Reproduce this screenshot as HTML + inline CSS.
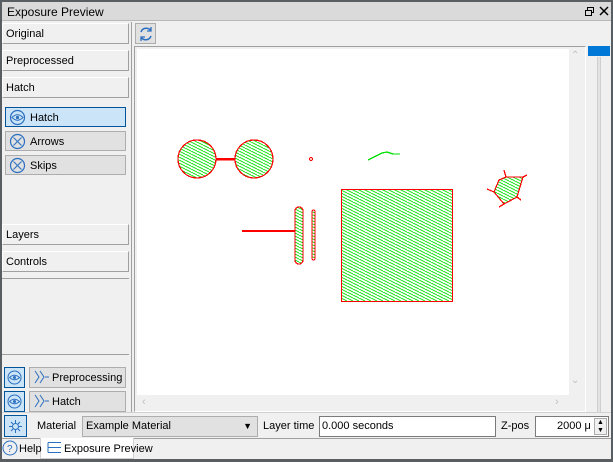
<!DOCTYPE html>
<html><head><meta charset="utf-8"><style>
*{box-sizing:border-box;margin:0;padding:0}
body{width:613px;height:462px;background:#595e62;font-family:"Liberation Sans",sans-serif;font-size:11px;color:#000;position:relative;overflow:hidden}
.a{position:absolute}
.win{left:2px;top:2px;width:609px;height:457px;background:#f0f0f0}
.title{left:0;top:0;width:609px;height:19px;background:#dadada;border-bottom:1px solid #b8b8b8}
.btn{position:absolute;background:#f0f0f0;border:1px solid #fff;border-right-color:#a0a0a0;border-bottom-color:#a0a0a0;padding-left:3px;padding-top:2px;line-height:17px}
.sb{position:absolute;background:#e1e1e1;border:1px solid #adadad;line-height:17px;padding-top:2px;padding-left:24px}
.sb svg{position:absolute;left:3px;top:1px}
.sel{background:#cce4f7;border-color:#005499}
.eye{position:absolute;width:21px;height:21px;background:#cce4f7;border:1px solid #005499}
.eye svg{position:absolute;left:2px;top:2px}
</style></head><body>
<div class="a win">
 <div class="a title"><span class="a" style="left:5px;top:3px;font-size:12px">Exposure Preview</span>
  <svg class="a" style="left:582px;top:4px" width="11" height="11"><rect x="1.5" y="4.5" width="6" height="5" fill="none" stroke="#000"/><path d="M3.5 4.5V1.5h6v5h-2" fill="none" stroke="#000"/></svg>
  <svg class="a" style="left:597px;top:4px" width="10" height="10"><path d="M1 1L9 9M9 1L1 9" stroke="#000" stroke-width="1.5"/></svg>
 </div>
</div>
<div class="btn" style="left:2px;top:23px;width:127px;height:21px">Original</div>
<div class="btn" style="left:2px;top:50px;width:127px;height:21px">Preprocessed</div>
<div class="btn" style="left:2px;top:77px;width:127px;height:21px">Hatch</div>
<div class="sb sel" style="left:5px;top:107px;width:121px;height:20px">Hatch<svg width="17" height="17"><circle cx="8.5" cy="8.5" r="7" fill="none" stroke="#2a6fc0" stroke-width="1.2"/><path d="M3 8.5Q8.5 3 14 8.5Q8.5 14 3 8.5Z" fill="none" stroke="#2a6fc0"/><circle cx="8.5" cy="8.5" r="1.6" fill="#2a6fc0"/></svg></div>
<div class="sb" style="left:5px;top:131px;width:121px;height:20px">Arrows<svg width="17" height="17"><circle cx="8.5" cy="8.5" r="7" fill="none" stroke="#2a6fc0" stroke-width="1.2"/><path d="M4.5 4.5L12.5 12.5M12.5 4.5L4.5 12.5" stroke="#2a6fc0"/></svg></div>
<div class="sb" style="left:5px;top:155px;width:121px;height:20px">Skips<svg width="17" height="17"><circle cx="8.5" cy="8.5" r="7" fill="none" stroke="#2a6fc0" stroke-width="1.2"/><path d="M4.5 4.5L12.5 12.5M12.5 4.5L4.5 12.5" stroke="#2a6fc0"/></svg></div>
<div class="btn" style="left:2px;top:224px;width:127px;height:21px">Layers</div>
<div class="btn" style="left:2px;top:251px;width:127px;height:21px">Controls</div>
<div class="a" style="left:2px;top:278px;width:127px;height:1px;background:#a0a0a0"></div>
<div class="a" style="left:2px;top:354px;width:127px;height:1px;background:#a0a0a0"></div>
<div class="a" style="left:131px;top:22px;width:1px;height:390px;background:#a0a0a0"></div>
<div class="eye" style="left:4px;top:367px"><svg width="15" height="15"><circle cx="7.5" cy="7.5" r="6.5" fill="none" stroke="#2a6fc0"/><path d="M2.5 7.5Q7.5 3 12.5 7.5Q7.5 12 2.5 7.5Z" fill="none" stroke="#2a6fc0"/><circle cx="7.5" cy="7.5" r="1.5" fill="#2a6fc0"/></svg></div>
<div class="eye" style="left:4px;top:391px"><svg width="15" height="15"><circle cx="7.5" cy="7.5" r="6.5" fill="none" stroke="#2a6fc0"/><path d="M2.5 7.5Q7.5 3 12.5 7.5Q7.5 12 2.5 7.5Z" fill="none" stroke="#2a6fc0"/><circle cx="7.5" cy="7.5" r="1.5" fill="#2a6fc0"/></svg></div>
<div class="sb" style="left:29px;top:367px;width:97px;height:21px;padding-left:22px">Preprocessing<svg width="18" height="16"><path d="M2 2L6 8L2 14M7 2L11 8L7 14M12 8h4" fill="none" stroke="#2a6fc0"/></svg></div>
<div class="sb" style="left:29px;top:391px;width:97px;height:21px;padding-left:22px">Hatch<svg width="18" height="16"><path d="M2 2L6 8L2 14M7 2L11 8L7 14M12 8h4" fill="none" stroke="#2a6fc0"/></svg></div>
<div class="a" style="left:135px;top:23px;width:21px;height:21px;background:#e1e1e1;border:1px solid #adadad"><svg class="a" style="left:2px;top:2px" width="16" height="16"><path d="M3 6A5.5 5.5 0 0 1 13 5M13 10A5.5 5.5 0 0 1 3 11" fill="none" stroke="#2a6fc0" stroke-width="1.5"/><path d="M13 1V5H9M3 15V11H7" fill="none" stroke="#2a6fc0" stroke-width="1.3"/></svg></div>
<div class="a" style="left:134px;top:46px;width:452px;height:366px;border:1px solid #a0a0a0;border-right-color:#fff;border-bottom-color:#fff;background:#f0f0f0"></div>
<div class="a" style="left:137px;top:49px;width:432px;height:346px;background:#fff"></div>
<span class="a" style="left:571px;top:50px;color:#c0c0c0;font-size:10px">&#8963;</span>
<span class="a" style="left:571px;top:375px;color:#c0c0c0;font-size:10px">&#8964;</span>
<span class="a" style="left:142px;top:396px;color:#c0c0c0;font-size:11px">&#8249;</span>
<span class="a" style="left:555px;top:396px;color:#c0c0c0;font-size:11px">&#8250;</span>
<div class="a" style="left:588px;top:46px;width:22px;height:10px;background:#0078d7"></div>
<div class="a" style="left:597px;top:57px;width:4px;height:355px;background:#e3e3e3;border-left:1px solid #cfcfcf;border-right:1px solid #cfcfcf"></div>
<svg class="a" style="left:137px;top:49px" width="432" height="346" shape-rendering="crispEdges">
<defs><pattern id="h" width="6" height="3" patternUnits="userSpaceOnUse"><rect width="6" height="3" fill="#fff"/><path d="M0 0L6 3M-6 0L0 3M0 -3L6 0" stroke="#00e000" stroke-width="1"/></pattern></defs>
<g stroke="#f00" stroke-width="1.2" fill="url(#h)">
<circle cx="60" cy="110" r="19"/><circle cx="117" cy="110" r="19"/>
<path d="M79 110H98" stroke-width="2.5"/>
<circle cx="174" cy="110" r="1.5" fill="none"/>
<rect x="204.5" y="140.5" width="111" height="112"/>
<rect x="158" y="158" width="8" height="57" rx="4"/>
<rect x="175" y="161" width="3" height="50" rx="1.5"/>
<path d="M105 182H158" stroke-width="2"/>
<path d="M369 128L386 128L380 148L367 155L357 143L362 131Z"/>
<path d="M369 128L367 121M386 128L390 126M357 143L350 140M367 155L362 158M380 148L384 151" stroke-width="1.3"/>
</g>
<path d="M231 111L245 104L250 103L256 105L263 105" stroke="#00e000" stroke-width="1.3" fill="none"/>
</svg>
<div class="a" style="left:2px;top:412px;width:609px;height:1px;background:#d0d0d0"></div>
<div class="eye" style="left:4px;top:415px;width:23px;height:22px"><svg width="17" height="17"><circle cx="8.5" cy="8.5" r="3" fill="none" stroke="#2a6fc0"/><path d="M8.5 2v3M8.5 12v3M2 8.5h3M12 8.5h3M4 4l2 2M11 11l2 2M13 4l-2 2M4 13l2-2" stroke="#2a6fc0"/></svg></div>
<span class="a" style="left:37px;top:420px">Material</span>
<div class="a" style="left:82px;top:416px;width:176px;height:21px;background:#e1e1e1;border:1px solid #adadad;line-height:19px;padding-left:3px">Example Material<span class="a" style="right:5px;top:0;font-size:9px">&#9660;</span></div>
<span class="a" style="left:263px;top:420px">Layer time</span>
<div class="a" style="left:319px;top:416px;width:177px;height:21px;background:#fff;border:1px solid #7a7a7a;line-height:19px;padding-left:2px">0.000 seconds</div>
<span class="a" style="left:501px;top:420px">Z-pos</span>
<div class="a" style="left:535px;top:416px;width:74px;height:21px;background:#fff;border:1px solid #7a7a7a;line-height:19px;padding-left:21px">2000 μ</div>
<div class="a" style="left:594px;top:418px;width:13px;height:17px;font-size:7px;line-height:8px;text-align:center;background:#f0f0f0;border:1px solid #adadad">▲<br>▼</div>
<div class="a" style="left:2px;top:438px;width:609px;height:1px;background:#a0a0a0"></div>
<div class="a" style="left:40px;top:438px;width:94px;height:21px;background:#fff;border:1px solid #d0d0d0;border-top:none"></div>
<svg class="a" style="left:2px;top:440px" width="16" height="16"><circle cx="8" cy="8" r="7" fill="none" stroke="#2a6fc0"/><text x="5" y="12" font-size="10" fill="#2a6fc0" font-family="Liberation Sans">?</text></svg>
<span class="a" style="left:19px;top:443px">Help</span>
<svg class="a" style="left:47px;top:440px" width="15" height="15"><path d="M1 2.5h13M1 7.5h13M1 12.5h13M1 2.5v10" stroke="#2a6fc0" fill="none"/></svg>
<span class="a" style="left:64px;top:443px">Exposure Preview</span>
</body></html>
